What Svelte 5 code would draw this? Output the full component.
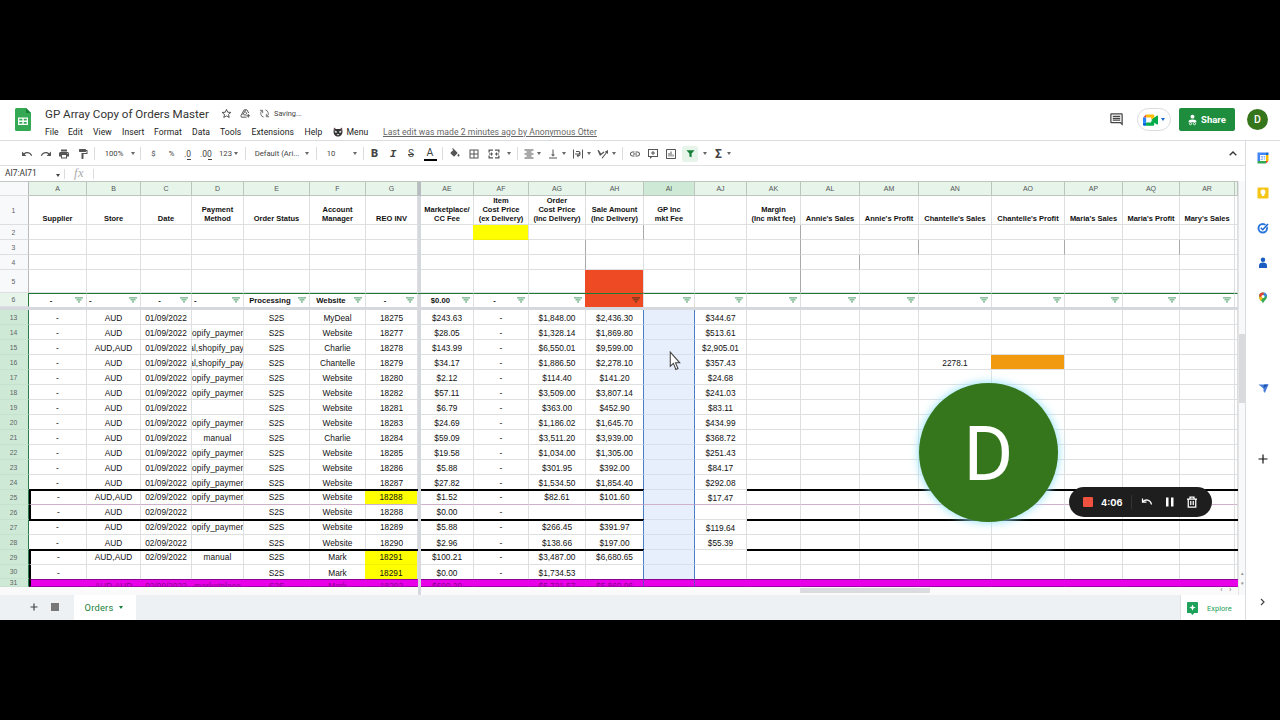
<script>
const menus = ['File', 'Edit', 'View', 'Insert', 'Format', 'Data', 'Tools', 'Extensions', 'Help'];

// [kind, width, value]
const tools = [
  ['icon', 18, 'undo'], ['icon', 19, 'redo'], ['icon', 17, 'print'], ['icon', 21, 'paint'], ['sep', 3],
  ['gap', 3], ['text', 30, '100%'], ['caret', 8], ['gap', 2], ['sep', 3], ['gap', 3],
  ['text', 17, '$'], ['text', 19, '%'], ['dec', 13, '.0'], ['dec', 24, '.00'], ['text', 15, '123'], ['caret', 5], ['gap', 5], ['sep', 4],
  ['gap', 5], ['text', 50, 'Default (Ari...'], ['caret', 10], ['gap', 2], ['sep', 4],
  ['gap', 5], ['text', 16, '10'], ['gap', 11], ['caret', 10], ['gap', 1], ['sep', 4],
  ['bold', 19, 'B'], ['italic', 18, 'I'], ['strike', 18, 'S'], ['color', 20, 'A'], ['sep', 5],
  ['icon', 19, 'fill'], ['icon', 20, 'borders'], ['icon', 19, 'merge'], ['caret', 11], ['gap', 1], ['sep', 5],
  ['icon', 17, 'align'], ['caret', 4], ['gap', 4], ['icon', 16, 'valign'], ['caret', 5], ['gap', 4],
  ['icon', 16, 'wrap'], ['caret', 6], ['gap', 3], ['icon', 16, 'rotate'], ['caret', 6], ['gap', 3], ['sep', 5],
  ['icon', 20, 'link'], ['icon', 16, 'comment'], ['gap', 2], ['icon', 16, 'chart'], ['gap', 3],
  ['filter', 16, 'filter'], ['caret', 13], ['sum', 15, 'Σ'], ['caret', 5]
];

const icons = {
  undo: 'M12.5 8c-2.65 0-5.05.99-6.9 2.6L2 7v9h9l-3.62-3.62c1.39-1.16 3.16-1.88 5.12-1.88 3.54 0 6.55 2.31 7.6 5.5l2.37-.78C21.08 11.03 17.15 8 12.5 8z',
  redo: 'M18.4 10.6C16.55 8.99 14.15 8 11.5 8c-4.65 0-8.58 3.03-9.96 7.22L3.9 16c1.05-3.19 4.05-5.5 7.6-5.5 1.95 0 3.73.72 5.12 1.88L13 16h9V7l-3.6 3.6z',
  print: 'M19 8H5c-1.66 0-3 1.34-3 3v6h4v4h12v-4h4v-6c0-1.66-1.34-3-3-3zm-3 11H8v-5h8v5zm3-7c-.55 0-1-.45-1-1s.45-1 1-1 1 .45 1 1-.45 1-1 1zm-1-9H6v4h12V3z',
  paint: 'M18 4V3c0-.55-.45-1-1-1H5c-.55 0-1 .45-1 1v4c0 .55.45 1 1 1h12c.55 0 1-.45 1-1V6h1v4H9v11c0 .55.45 1 1 1h2c.55 0 1-.45 1-1v-9h8V4h-3z',
  fill: 'M16.56 8.94L7.62 0 6.21 1.41l2.38 2.38-5.15 5.15c-.59.59-.59 1.54 0 2.12l5.5 5.5c.29.29.68.44 1.06.44s.77-.15 1.06-.44l5.5-5.5c.59-.58.59-1.53 0-2.12zM19 11.5s-2 2.17-2 3.5c0 1.1.9 2 2 2s2-.9 2-2c0-1.33-2-3.5-2-3.5z',
  borders: 'M3 3v18h18V3H3zm8 16H5v-6h6v6zm0-8H5V5h6v6zm8 8h-6v-6h6v6zm0-8h-6V5h6v6z',
  merge: 'M1 9V3h9v2.500H3.500V9zM14 3h9v6h-2.500V5.500H14zM1 15v6h9v-2.500H3.500V15zM23 15v6h-9v-2.500h6.500V15zM2 11h4V8l4 4-4 4v-3H2zM22 11h-4V8l-4 4 4 4v-3h4z',
  align: 'M7 15v2h10v-2H7zm-4 6h18v-2H3v2zm0-8h18v-2H3v2zm4-6v2h10V7H7zM3 3v2h18V3H3z',
  valign: 'M16 13h-3V3h-2v10H8l4 4 4-4zM4 19v2h16v-2H4z',
  wrap: 'M2 3h2v18H2zM20 3h2v18h-2zM6 11h7c1 0 1.500-.5 1.500-1.500S14 8 13 8H8V6h5c2.500 0 4 1.500 4 3.500v3c0 2.500-1.500 4-4 4v2.500L9 15.500l4-3.500v2.500c1.500 0 2-.5 2-2L13 13H6z',
  rotate: 'M1 5l2.500-1 4.500 7 5.500-4 1.300 2L6 16zM9 20l9-11-3-1 7-4v8l-2.500-2L11 21z',
  link: 'M3.900 12c0-1.710 1.390-3.100 3.100-3.100h4V7H7c-2.760 0-5 2.240-5 5s2.240 5 5 5h4v-1.900H7c-1.710 0-3.100-1.390-3.100-3.100zM8 13h8v-2H8v2zm9-6h-4v1.900h4c1.710 0 3.100 1.390 3.100 3.100s-1.390 3.100-3.100 3.100h-4V17h4c2.760 0 5-2.240 5-5s-2.240-5-5-5z',
  comment: 'M22 2H2v16h4v4l4-4h12V2zm-2 14H4V4h16v12zM11 6h2v3h3v2h-3v3h-2v-3H8V9h3z',
  chart: 'M9 17H7v-7h2v7zm4 0h-2V7h2v10zm4 0h-2v-4h2v4zm3 3H4V4h16v16zm0-18H4c-1.100 0-2 .9-2 2v16c0 1.100.9 2 2 2h16c1.100 0 2-.9 2-2V4c0-1.100-.9-2-2-2z',
  filter: 'M1 3h22l-8 9v10l-6-2v-8z'
};

const cols = ['A', 'B', 'C', 'D', 'E', 'F', 'G', '', 'AE', 'AF', 'AG', 'AH', 'AI', 'AJ', 'AK', 'AL', 'AM', 'AN', 'AO', 'AP', 'AQ', 'AR', ''];
const FREEZE = 7, AH = 11, AI = 12, AJ = 13, LAST = 22;

const titles = ['Supplier', 'Store', 'Date', 'Payment\nMethod', 'Order Status', 'Account\nManager', 'REO INV', '',
  'Marketplace/\nCC Fee', 'Item\nCost Price\n(ex Delivery)', 'Order\nCost Price\n(Inc Delivery)', 'Sale Amount\n(Inc Delivery)',
  'GP Inc\nmkt Fee', '', 'Margin\n(Inc mkt fee)', "Annie's Sales", "Annie's Profit", "Chantelle's Sales", "Chantelle's Profit",
  "Maria's Sales", "Maria's Profit", "Mary's Sales", ''];

// darker right borders left over from the column formatting
const dark = { 2: [11, 14], 3: [10, 14, 16, 18, 20], 4: [10, 14, 15], 5: [14] };

const filters = ['-', '-', '-', '-', 'Processing', 'Website', '-', '', '$0.00', '-'];

const sp = 'shopify_payments';
const orders = [
  [13, 'AUD', '01', '', 'MyDeal', '18275', '$243.63', '$1,848.00', '$2,436.30', '$344.67'],
  [14, 'AUD', '01', sp, 'Website', '18277', '$28.05', '$1,328.14', '$1,869.80', '$513.61'],
  [15, 'AUD,AUD', '01', 'manual,' + sp, 'Charlie', '18278', '$143.99', '$6,550.01', '$9,599.00', '$2,905.01'],
  [16, 'AUD', '01', 'manual,' + sp, 'Chantelle', '18279', '$34.17', '$1,886.50', '$2,278.10', '$357.43'],
  [17, 'AUD', '01', sp, 'Website', '18280', '$2.12', '$114.40', '$141.20', '$24.68'],
  [18, 'AUD', '01', sp, 'Website', '18282', '$57.11', '$3,509.00', '$3,807.14', '$241.03'],
  [19, 'AUD', '01', '', 'Website', '18281', '$6.79', '$363.00', '$452.90', '$83.11'],
  [20, 'AUD', '01', sp, 'Website', '18283', '$24.69', '$1,186.02', '$1,645.70', '$434.99'],
  [21, 'AUD', '01', 'manual', 'Charlie', '18284', '$59.09', '$3,511.20', '$3,939.00', '$368.72'],
  [22, 'AUD', '01', sp, 'Website', '18285', '$19.58', '$1,034.00', '$1,305.00', '$251.43'],
  [23, 'AUD', '01', sp, 'Website', '18286', '$5.88', '$301.95', '$392.00', '$84.17'],
  [24, 'AUD', '01', sp, 'Website', '18287', '$27.82', '$1,534.50', '$1,854.40', '$292.08'],
  [25, 'AUD,AUD', '02', sp, 'Website', '18288', '$1.52', '$82.61', '$101.60', '$17.47'],
  [26, 'AUD', '02', '', 'Website', '18288', '$0.00', '', '', ''],
  [27, 'AUD', '02', sp, 'Website', '18289', '$5.88', '$266.45', '$391.97', '$119.64'],
  [28, 'AUD', '02', '', 'Website', '18290', '$2.96', '$138.66', '$197.00', '$55.39'],
  [29, 'AUD,AUD', '02', 'manual', 'Mark', '18291', '$100.21', '$3,487.00', '$6,680.65', ''],
  [30, '', '', '', 'Mark', '18291', '$0.00', '$1,734.53', '', ''],
  [31, 'AUD,AUD', '02', 'marketplace', 'Mark', '18292', '$690.20', '$5,721.57', '$5,860.96', '']
];

const rows = orders.map(([n, store, day, pay, manager, inv, fee, cost, sale, gp]) => ({
  n,
  cells: [n == 31 ? '' : '-', store, day && day + '/09/2022', pay, 'S2S', manager, inv, '', fee, n == 31 ? '' : '-', cost, sale, '', gp,
    '', '', '', n == 16 ? '2278.1' : '', '', '', '', '', '']
}));
</script>

<svelte:head>
  <title>GP Array Copy of Orders Master</title>
</svelte:head>

<div class="screen">
  <div class="app">
    <header>
      <svg class="logo" viewBox="0 0 16 23"><path fill="#34a853" d="M1.500 0H11l5 5v16.500a1.500 1.500 0 0 1-1.500 1.500h-13A1.500 1.500 0 0 1 0 21.500v-20A1.500 1.500 0 0 1 1.500 0z"/><path fill="#188038" d="M11 0l5 5h-5z"/><path fill="#fff" d="M3 9.500h10v7.500H3zM4.300 10.800v1.800h3v-1.800zm4.400 0v1.800h3v-1.800zM4.300 14v1.700h3V14zm4.400 0v1.700h3V14z" fill-rule="evenodd"/></svg>
      <div class="heading">
        <div class="title">
          <h1>GP Array Copy of Orders Master</h1>
          <svg viewBox="0 0 24 24"><path d="M12 3l2.600 6.200 6.900.5-5.200 4.400 1.600 6.600-5.900-3.500-5.900 3.500 1.600-6.600-5.200-4.400 6.900-.5z" fill="none" stroke="#444" stroke-width="2"/></svg>
          <svg viewBox="0 0 24 24" fill="none" stroke="#444" stroke-width="2"><path d="M14 20H3l-1-3L9 4h6l4 7M6 15l6-10M8 15h6M12 8l3 5M18 13v8M14 17h8"/></svg>
          <svg viewBox="0 0 24 24" fill="none" stroke="#666" stroke-width="2"><path d="M10 20A8.500 8.500 0 0 1 6 6M2 5h6v6M14 4a8.500 8.500 0 0 1 4 14M22 19h-6v-6"/></svg>
          <span>Saving...</span>
        </div>
        <nav>
          {#each menus as menu}<span>{menu}</span>{/each}
          <svg viewBox="0 0 20 20"><path fill="#333" d="M2 1l4 3h8l4-3 1 8c0 6-4 10-9 10S1 15 1 9z"/><path fill="#ddd" d="M3 7l5 2-1 3-3-1zM17 7l-5 2 1 3 3-1zM7 14h6l-3 3z"/><path fill="#b66" d="M2 2l3 3-2 1zM18 2l-3 3 2 1z"/></svg>
          <span>Menu</span>
          <span class="edit">Last edit was made 2 minutes ago by Anonymous Otter</span>
        </nav>
      </div>
      <svg class="talk" viewBox="0 0 24 24"><path fill="#444" d="M22 4c0-1.100-.9-2-2-2H4c-1.100 0-2 .9-2 2v12c0 1.100.9 2 2 2h14l4 4V4zM20 4v13.200L18.800 16H4V4h16zM6 12h12v2H6zm0-3h12v2H6zm0-3h12v2H6z"/></svg>
      <div class="meet">
        <svg viewBox="0 0 24 18"><path fill="#ea4335" d="M0 5l5-5v5z"/><path fill="#fbbc04" d="M5 0h11q2 0 2 2v5h-5V5H5z"/><path fill="#2684fc" d="M0 5h5v8H0z"/><path fill="#0066da" d="M0 13h5v5H2q-2 0-2-2z"/><path fill="#00ac47" d="M5 13h8v-2h5v5q0 2-2 2H5zM13 9l9-7q2-1 2 1v12q0 2-2 1z"/></svg>
        <i></i>
      </div>
      <div class="share">
        <svg viewBox="0 0 16 20" fill="#fff"><circle cx="8" cy="4" r="3.500"/><path d="M1 13q0-4 7-4t7 4v1H1z"/><circle cx="4.500" cy="16.500" r="2" fill="none" stroke="#fff" stroke-width="1.500"/><circle cx="11.500" cy="16.500" r="2" fill="none" stroke="#fff" stroke-width="1.500"/></svg>
        Share
      </div>
      <div class="user">D</div>
    </header>

    <main>
      <section>
        <div class="toolbar">
          {#each tools as [kind, width, value]}
            <div class="tool {kind}" style="width: {width}px">
              {#if kind == 'icon' || kind == 'filter'}
                <svg viewBox="0 0 24 24"><path d={icons[value]}/></svg>
              {:else if value}
                <span>{value}</span>
              {/if}
            </div>
          {/each}
          <svg class="collapse" viewBox="0 0 8 5"><path d="M.7 4.300L4 1l3.300 3.300" fill="none" stroke="#333" stroke-width="1.300"/></svg>
        </div>

        <div class="formula">
          <span class="range">AI7:AI71</span><i class="arrow"></i><b></b><em>fx</em><b></b>
        </div>

        <div class="view">
          <div class="sheet">
            <div class="row letters">
              <div class="num"></div>
              {#each cols as col, i}
                <div class="cell" class:bar={i == FREEZE} class:picked={i == AI}>{col}</div>
              {/each}
            </div>
            <div class="row titles">
              <div class="num">1</div>
              {#each titles as text, i}
                <div class="cell" class:bar={i == FREEZE}>{text}</div>
              {/each}
            </div>
            {#each [2, 3, 4, 5] as n}
              <div class="row r{n}">
                <div class="num">{n}</div>
                {#each cols as col, i}
                  <div class="cell" class:bar={i == FREEZE} class:dark={dark[n].includes(i)} class:yellow={n == 2 && i == 9} class:red={n == 5 && i == AH}></div>
                {/each}
              </div>
            {/each}
            <div class="row filters">
              <div class="num">6</div>
              {#each cols as col, i}
                <div class="cell" class:bar={i == FREEZE} class:left={i == 1 || i == 3} class:red={i == AH}>
                  {filters[i] || ''}
                  {#if col}<svg viewBox="0 0 8 6"><path d="M0 .8h8M1.500 2.800h5M3 4.800h2" stroke-width="1.200"/></svg>{/if}
                </div>
              {/each}
            </div>
            <div class="freeze"></div>
            {#each rows as row}
              <div class="row body b{row.n}">
                <div class="num">{row.n}</div>
                {#each row.cells as text, i}
                  <div class="cell" class:pay={i == 3} class:bar={i == FREEZE} class:sel={i == AI} class:gp={i == AJ} class:end={i == LAST}
                    class:yellow={i == 6 && [25, 29, 30].includes(row.n)} class:orange={row.n == 16 && i == 18}>{text}</div>
                {/each}
              </div>
            {/each}
            <div class="hscroll"><div class="stub"></div><div class="thumb"></div><span>‹</span><span>›</span></div>
          </div>
          <div class="vscroll"><div class="thumb"></div><span>▴</span><span>▾</span></div>
        </div>

        <footer>
          <svg class="add" viewBox="0 0 8 8"><path d="M4 .5v7M.5 4h7" stroke="#444" stroke-width="1.200"/></svg>
          <div class="all"></div>
          <div class="tab">Orders <i></i></div>
          <div class="explore">
            <svg viewBox="0 0 12 14"><path fill="#1ea15b" d="M1 0h10a1 1 0 0 1 1 1v10a1 1 0 0 1-1 1H8l-2 2-2-2H1a1 1 0 0 1-1-1V1a1 1 0 0 1 1-1z"/><path fill="#fff" d="M6 2.500L7 5l2.500 1L7 7 6 9.500 5 7 2.500 6 5 5z"/></svg>
            Explore
          </div>
        </footer>
      </section>

      <aside>
        <svg viewBox="0 0 24 24"><path fill="#4285f4" d="M1 1h17v5H6v12H1z"/><path fill="#1967d2" d="M18 1h5v5h-5z"/><path fill="#fbbc04" d="M18 6h5v12h-5z"/><path fill="#34a853" d="M1 18h17v5H1z"/><path fill="#ea4335" d="M18 18h5l-5 5z"/><text x="12" y="16" text-anchor="middle" font-size="10" fill="#4285f4">31</text></svg>
        <svg viewBox="0 0 24 24"><rect x="1" y="1" width="22" height="22" rx="2" fill="#f5c518"/><circle cx="12" cy="10" r="5" fill="#fff"/><path fill="#fff" d="M9.500 14h5v4h-5z"/></svg>
        <svg viewBox="0 0 24 24"><circle cx="11.500" cy="12.500" r="8.500" fill="none" stroke="#2a77dd" stroke-width="4"/><path d="M7 11l4.500 4.500L21 5" fill="none" stroke="#fff" stroke-width="5"/><path d="M7.500 11.500l4 4L22 4" fill="none" stroke="#1a66cc" stroke-width="3"/></svg>
        <svg viewBox="0 0 24 24" fill="#1b5cc0"><circle cx="12" cy="5.500" r="4.500"/><path d="M4 22v-5c0-4 3-6 8-6s8 2 8 6v5z"/></svg>
        <svg viewBox="0 0 24 24"><path fill="#34a853" d="M12 1a8 8 0 0 1 8 8c0 6-6 8-8 14-2-6-8-8-8-14a8 8 0 0 1 8-8z"/><path fill="#ea4335" d="M12 1a8 8 0 0 0-8 7l4 3 7-9z"/><path fill="#4285f4" d="M14 1a8 8 0 0 1 6 7l-7 2z"/><path fill="#fbbc04" d="M4 9l4 1 4 2-5 6q-3-4-3-9z"/><circle cx="12" cy="9" r="3" fill="#fff"/></svg>
        <svg class="addon" viewBox="0 0 24 24"><path fill="#4a80dc" d="M1 3h22l-8 19-3-4V12z"/><path fill="#1b56b4" d="M13 3h10l-11 9z"/></svg>
        <svg class="more" viewBox="0 0 10 10"><path d="M5 .5v9M.5 5h9" stroke="#111" stroke-width="1.200"/></svg>
        <svg class="hide" viewBox="0 0 5 8"><path d="M1 1l3 3-3 3" fill="none" stroke="#444" stroke-width="1.200"/></svg>
      </aside>
    </main>

    <svg class="cursor" viewBox="0 0 11 19"><path d="M1 1v13.500l3-2.700 2.300 5.700 2-.9L6 11.200h4z" fill="#fff" stroke="#444"/></svg>
    <div class="face">D</div>
    <div class="recorder">
      <i class="stop"></i><span>4:06</span><i class="line"></i>
      <svg viewBox="0 0 24 24" fill="none" stroke="#fff" stroke-width="2.500"><path d="M3 5v7h8M4 11c5-5 15-4 17 6"/></svg>
      <svg viewBox="0 0 24 24" fill="#fff"><path d="M4 3h5v18H4zM14 3h5v18h-5z"/></svg>
      <svg viewBox="0 0 24 24" fill="none" stroke="#fff" stroke-width="2.500"><path d="M2 6h20M8 6V2h8v4M4.500 6v16h15V6M9.500 10v8M14.500 10v8"/></svg>
    </div>
  </div>
</div>

<style>
:global(body) {
  background: #000;
}

.screen {
  box-sizing: border-box;
  width: 1280px;
  height: 720px;
  padding: 100px 0;
  background: #000;
  font-family: Roboto, sans-serif;
  overflow: hidden;
}

.app {
  position: relative;
  height: 520px;
  background: #fff;
  overflow: hidden;
}

svg {
  display: block;
}

header {
  box-sizing: border-box;
  height: 41px;
  display: flex;
  align-items: center;
  padding: 0 12px 1px 15px;
  border-bottom: 1px solid #dadce0;
}

.logo {
  width: 16px;
  height: 23px;
}

.heading {
  margin-left: 14px;
  padding-top: 6px;
  flex: 1;
}

.title {
  height: 18px;
  display: flex;
  align-items: center;
}

h1 {
  margin: 0;
  width: 176px;
  font-size: 11.600px;
  font-weight: 400;
  color: #333;
  white-space: nowrap;
}

.title svg {
  width: 11px;
  height: 11px;
  margin-right: 8px;
}

.title span {
  margin-left: -4px;
  font-size: 7.400px;
  color: #444;
}

nav {
  display: grid;
  grid-template-columns: 23px 25px 29px 32px 38px 28px 31.500px 53px 28.500px 13.500px 36.500px 220px;
  height: 18px;
  align-items: center;
  font-size: 8.600px;
  letter-spacing: .06px;
  color: #222;
  white-space: nowrap;
}

nav svg {
  width: 10px;
  height: 10px;
}

.edit {
  color: #666;
  text-decoration: underline;
}

.talk {
  width: 15px;
  height: 15px;
  margin-right: 13px;
}

.meet {
  box-sizing: border-box;
  width: 34px;
  height: 23px;
  margin-right: 8px;
  border: 1px solid #dadce0;
  border-radius: 12px;
  display: flex;
  align-items: center;
  justify-content: center;
  gap: 3px;
}

.meet svg {
  width: 15px;
  height: 12px;
}

.meet i {
  border: 2.500px solid transparent;
  border-top: 3px solid #1967d2;
  border-bottom: 0;
}

.share {
  width: 56px;
  height: 23px;
  margin-right: 12px;
  border-radius: 2px;
  background: #1e8e3e;
  color: #fff;
  font-size: 9.500px;
  font-weight: 700;
  display: flex;
  align-items: center;
  justify-content: center;
  gap: 4px;
}

.share svg {
  width: 9px;
  height: 12px;
}

.user {
  width: 21px;
  height: 21px;
  border-radius: 50%;
  background: #35761d;
  color: #fff;
  font-size: 10.500px;
  font-weight: 500;
  line-height: 22px;
  text-align: center;
}

main {
  display: flex;
  height: 479px;
}

section {
  width: 1245px;
}

.toolbar {
  box-sizing: border-box;
  height: 25px;
  padding: 1px 0 0 18px;
  display: flex;
  align-items: center;
  border-bottom: 1px solid #e0e0e0;
}

.tool {
  flex: none;
  height: 23px;
  display: flex;
  align-items: center;
  justify-content: center;
  color: #444;
  font-size: 7.700px;
  white-space: nowrap;
}

.tool svg {
  width: 12px;
  height: 12px;
  fill: #555;
}

.sep::before {
  content: '';
  width: 1px;
  height: 13px;
  background: #dadce0;
}

.caret::before {
  content: '';
  border: 2.500px solid transparent;
  border-top: 3px solid #666;
  border-bottom: 0;
}

.dec span {
  position: relative;
  font-size: 8.500px;
}

.dec span::after {
  content: '';
  position: absolute;
  right: 0;
  bottom: -1px;
  width: 4px;
  border-bottom: 1px solid #444;
}

.bold {
  font-size: 11px;
  font-weight: 900;
}

.italic {
  font: italic 700 11px "Liberation Mono", monospace;
}

.strike {
  font-size: 10px;
  text-decoration: line-through;
}

.color span {
  width: 13px;
  font-size: 10.500px;
  line-height: 12px;
  text-align: center;
  border-bottom: 2px solid #000;
}

.filter {
  height: 16px;
  background: #e6f4ea;
  border-radius: 2px;
}

.filter svg {
  width: 9px;
  height: 9px;
  fill: #188038;
}

.sum {
  font-size: 12px;
  font-weight: 700;
}

.collapse {
  width: 8px;
  height: 5px;
  margin: 0 8px 0 auto;
}

.formula {
  height: 15px;
  padding-left: 5px;
  display: flex;
  align-items: center;
  font-size: 8.400px;
  color: #333;
}

.range {
  width: 51px;
  margin-top: -1px;
}

.arrow {
  border: 2.500px solid transparent;
  border-top: 3px solid #444;
  border-bottom: 0;
  margin-top: 3px;
}

.formula b {
  width: 1px;
  height: 10px;
  margin-left: 4px;
  background: #dadce0;
}

.formula em {
  margin: -1px 5px 0 9px;
  font: italic 12.500px "Liberation Serif", serif;
  letter-spacing: .5px;
  color: #aaa;
}

.view {
  display: flex;
  height: 414px;
  font-family: "Liberation Sans", Arial, sans-serif;
}

.sheet {
  width: 1238px;
}

.row {
  display: grid;
  grid-template-columns: 29px 58px 54px 51px 52px 66px 56px 52px 3px 53px 55px 57px 58px 51px 52px 54px 59px 59px 73px 73px 58px 57px 55px 3px;
  height: 15px;
  font-size: 8.300px;
  color: #111;
}

.cell, .num {
  box-sizing: border-box;
  min-width: 0;
  display: flex;
  align-items: center;
  justify-content: center;
  border-right: 1px solid #dedfe0;
  border-bottom: 1px solid #dedfe0;
  overflow: hidden;
  white-space: pre;
  text-align: center;
}

.num {
  padding-right: 1px;
  font-size: 6.800px;
  color: #5f6368;
  background: #f8f9fa;
  border-right-color: #bbb;
}

.row .bar {
  padding: 0;
  background: #d5d8dd;
  border: 0;
}

.letters .cell {
  font-size: 7px;
  color: #555;
  background: #e6f4ea;
  border-top: 1px solid #c4c7c5;
  border-color: #bdc5bf;
}

.letters .num {
  border-top: 1px solid #c4c7c5;
}

.letters .picked {
  background: #ceead6;
}

.letters .bar {
  background: #b8bbbf;
}

.titles {
  height: 29px;
  font-size: 7.500px;
  font-weight: 700;
  line-height: 9px;
}

.titles .cell {
  align-items: flex-end;
  padding-bottom: 1px;
}

.titles .num {
  font-weight: 400;
}

.r5 {
  height: 23px;
}

.row .dark {
  border-right-color: #aaa;
}

.row .yellow {
  margin-left: -1px;
  background: #ff0;
  border-bottom-color: #f2f200;
}

.row .red {
  margin-left: -1px;
  background: #ee4a23;
  border-bottom-color: #ee4a23;
}

.row .orange {
  margin-left: -1px;
  background: #f1990f;
}

.filters {
  height: 14px;
  font-size: 7.700px;
  font-weight: 700;
}

.filters .cell {
  position: relative;
  border-top: 1px solid #1f7a35;
  border-bottom: 0;
  padding-right: 11px;
}

.filters .bar, .filters .cell:last-child {
  padding: 0;
  border-top: 1px solid #1f7a35;
}

.filters .left {
  justify-content: flex-start;
  padding-left: 2px;
}

.filters .num {
  font-weight: 400;
  font-size: 6.800px;
  background: #e6f4ea;
  border-right-color: #2a7a3c;
}

.filters svg {
  position: absolute;
  right: 3px;
  top: 3px;
  width: 8px;
  height: 6px;
  stroke: #6bae82;
}

.filters .red svg {
  stroke: #6b3517;
}

.freeze {
  height: 3px;
  background: #d5d8dd;
}

.body .cell {
  padding-top: 1px;
}

.body .pay {
  letter-spacing: .12px;
}

.body .num {
  background: #ceead6;
  border-right: 1px solid #2a7a4c;
  border-bottom-color: #c5e2ce;
}

.body .sel {
  margin-left: -1px;
  background: #e6effb;
  border-left: 1px solid #4a7fc8;
  border-right: 1px solid #4a7fc8;
  border-bottom-color: #d6dfeb;
}

.body .end {
  border-right-color: #ddd;
}

/* thick rules above grouped orders, interrupted at AI and AJ */
.b25 .cell:not(.sel, .gp, .bar), .b27 .cell:not(.sel, .gp, .bar), .b29 .cell:not(.sel, .gp, .bar) {
  margin-top: 1px;
  padding: 0 0 1px;
  box-shadow: 0 -2px #000;
}

.b25 .cell:not(.bar) {
  border-bottom-color: #d0b0cc;
}

.b25 .num + .cell, .b26 .num + .cell, .b29 .num + .cell, .b30 .num + .cell, .b31 .num + .cell {
  border-left: 2px solid #000;
}

.b26 .cell {
  padding: 0 0 1px;
}

.b30 {
  height: 14px;
}

.b30 .cell {
  padding-top: 2px;
  border-bottom: 0;
}

.b31 {
  height: 8px;
}

.b31 .cell:not(.bar) {
  align-items: flex-start;
  line-height: 10px;
  background: #e800e8;
  border-top: 1px solid #8a0090;
  border-bottom: 1px solid #a000a5;
  border-right-color: #e800e8;
  color: #8b0090;
}

.b31 .sel:not(.bar) {
  border-right-color: #7040c0;
  border-left-color: #7040c0;
}

.hscroll {
  height: 8px;
  display: flex;
  background: #fafafa;
  font-size: 7px;
  line-height: 6px;
  color: #777;
}

.hscroll .stub {
  width: 3px;
  margin-left: 418px;
  background: #d5d8dd;
}

.hscroll .thumb {
  width: 131px;
  height: 5px;
  margin: 1px 290px 0 379px;
  background: #dadce0;
}

.hscroll span {
  width: 9px;
}

.vscroll {
  width: 7px;
  background: #f8f9fa;
  border-left: 1px solid #e4e4e4;
  box-sizing: border-box;
  font-size: 5px;
  line-height: 10px;
  text-align: center;
  color: #888;
}

.vscroll .thumb {
  height: 69px;
  margin: 153px 0 165px;
  background: #d8dadd;
}

.vscroll span {
  display: block;
}

footer {
  height: 25px;
  display: flex;
  align-items: center;
  background: #edf1f3;
}

.add {
  width: 8px;
  height: 8px;
  margin: 0 0 2px 30px;
}

.all {
  width: 8px;
  height: 8px;
  margin: 0 15px 2px 13px;
  background: #777;
}

.tab {
  box-sizing: border-box;
  width: 62px;
  height: 25px;
  padding-right: 2px;
  background: #fff;
  color: #188038;
  font-size: 9.300px;
  letter-spacing: .2px;
  display: flex;
  align-items: center;
  justify-content: center;
  gap: 6px;
}

.tab i {
  border: 2.500px solid transparent;
  border-top: 3px solid #188038;
  border-bottom: 0;
}

.explore {
  box-sizing: border-box;
  width: 65px;
  height: 25px;
  margin-left: auto;
  padding: 2px 0 0 6px;
  display: flex;
  align-items: center;
  gap: 9px;
  background: #fff;
  border-left: 1px solid #e0e3e5;
  color: #1e9e55;
  font-size: 7.500px;
}

.explore svg {
  width: 11px;
  height: 13px;
}

aside {
  box-sizing: border-box;
  width: 35px;
  padding-top: 11px;
  border-left: 1px solid #dadce0;
  display: flex;
  flex-direction: column;
  align-items: center;
}

aside svg {
  width: 12px;
  height: 12px;
  margin-bottom: 23px;
}

aside .addon {
  width: 11px;
  height: 11px;
  margin: 56px 0 60px;
}

aside .more {
  width: 10px;
  height: 10px;
  margin: 0;
}

aside .hide {
  width: 5px;
  height: 8px;
  margin: 134px 1px 0 0;
}

.cursor {
  position: absolute;
  left: 669px;
  top: 251px;
  width: 12px;
  height: 20px;
}

.face {
  position: absolute;
  left: 919px;
  top: 283px;
  width: 139px;
  height: 139px;
  border-radius: 50%;
  background: #35761d;
  box-shadow: 0 0 8px 1px #9be4f8;
  color: #fff;
  font-size: 76px;
  line-height: 142px;
  text-align: center;
}

.recorder {
  position: absolute;
  left: 1069px;
  top: 387px;
  width: 143px;
  height: 30px;
  box-sizing: border-box;
  padding: 0 14px;
  border-radius: 15px;
  background: #1e1e1e;
  display: flex;
  align-items: center;
  color: #fff;
}

.recorder span {
  width: 30px;
  margin-left: 8px;
  font: 700 9.200px Inter, sans-serif;
}

.recorder svg {
  width: 12px;
  height: 12px;
  margin-left: 10.500px;
}

.recorder svg:first-of-type {
  margin-left: 9px;
}

.stop {
  width: 10px;
  height: 10px;
  background: #f0523f;
  border-radius: 1px;
}

.line {
  width: 1px;
  height: 14px;
  background: #333;
}
</style>
